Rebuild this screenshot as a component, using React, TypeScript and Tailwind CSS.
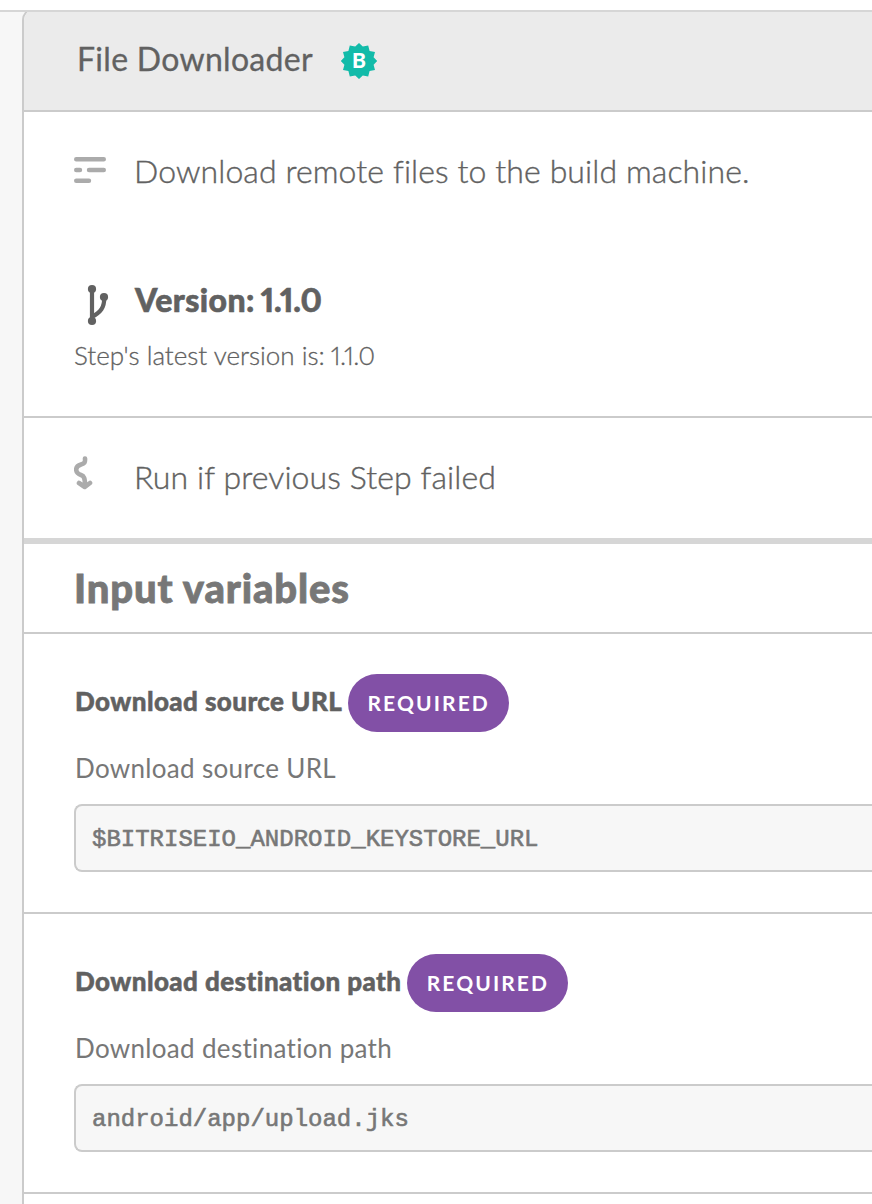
import React from "react";

function VerifiedBadge() {
  return (
    <svg width="38" height="38" viewBox="0 0 38 38" className="ml-[27px] mt-[1px]">
      <path
        d="M19 1L22.8 4.6L28.2 3.4L29.6 8.9L35 10L33.6 15.2L37.2 19L33.6 22.8L35 28L29.6 29.1L28.2 34.6L22.8 33.4L19 37L15.2 33.4L9.8 34.6L8.4 29.1L3 28L4.4 22.8L0.8 19L4.4 15.2L3 10L8.4 8.9L9.8 3.4L15.2 4.6Z"
        fill="#12bba9"
      />
      <text
        x="19"
        y="26"
        textAnchor="middle"
        fill="#fff"
        className="font-['Lato',sans-serif] text-[21px] font-black"
      >
        B
      </text>
    </svg>
  );
}

function TextIcon() {
  return (
    <svg width="32" height="27" viewBox="0 0 32 27" stroke="#ababab" strokeWidth="4.4" strokeLinecap="round">
      <path d="M2.2 2.3H29.8M2.2 13H6M15 13H29.8M2.2 23.7H15" />
    </svg>
  );
}

function BranchIcon() {
  return (
    <svg width="22" height="42" viewBox="0 0 22 42" fill="#616161" className="ml-[13px] mt-[10px]">
      <circle cx="5" cy="5" r="4.1" />
      <circle cx="5" cy="37" r="4.1" />
      <circle cx="17" cy="13" r="4.1" />
      <path d="M5 5V37M17.3 13C17.5 24 13.5 28 5 33" fill="none" stroke="#616161" strokeWidth="4.2" />
    </svg>
  );
}

function ArrowIcon() {
  return (
    <svg
      width="20"
      height="34"
      viewBox="0 0 20 34"
      fill="none"
      stroke="#ababab"
      strokeWidth="4.6"
      strokeLinecap="round"
      strokeLinejoin="round"
    >
      <path d="M11 2.5C11.3 6.5 10.5 7.5 7 8.5C3.5 9.5 2.2 11.5 2.2 13.5C2.2 16.5 4 18 7 19C10 20 11 22 11 30M5 27L10.8 31L16 27" />
    </svg>
  );
}

const inputs = [
  {
    name: "Download source URL",
    value: "$BITRISEIO_ANDROID_KEYSTORE_URL",
  },
  {
    name: "Download destination path",
    value: "android/app/upload.jks",
  },
];

function App() {
  return (
    <div className="h-[1204px] overflow-hidden bg-white pt-[10px] font-['Lato',sans-serif] whitespace-nowrap text-[#616161]">
      <div className="h-[1194px] overflow-hidden border-t-2 border-[#d6d6d6] bg-[#f7f7f7] pl-[22px]">
        <div className="-mt-[4px] h-[1300px] overflow-hidden rounded-tl-[12px] border-t-2 border-l-2 border-[#cbcbcb] bg-white">
          <div className="flex h-[102px] items-center border-b-2 border-[#cbcbcb] bg-[#ebebeb] pl-[53px]">
            <h1 className="pb-[2px] text-[32px] tracking-[0.3px] [-webkit-text-stroke:0.3px_#616161]">
              File Downloader
            </h1>
            <VerifiedBadge />
          </div>

          <div className="h-[306px] border-b-2 border-[#cbcbcb] pt-[36px] pl-[50px]">
            <div className="flex h-[48px] items-center">
              <div className="-mt-[4px] w-[60px]">
                <TextIcon />
              </div>
              <p className="pb-[2px] text-[32px] font-light tracking-[0.1px] [-webkit-text-stroke:0.4px_#616161]">
                Download remote files to the build machine.
              </p>
            </div>
            <div className="mt-[80px] flex h-[48px] items-center">
              <div className="w-[60px]">
                <BranchIcon />
              </div>
              <h2 className="pb-px pl-px text-[32px] font-black tracking-[0.4px] [-webkit-text-stroke:0.6px_#616161]">
                Version: <span className="-ml-[2px] tracking-[-0.2px] proportional-nums">1.1.0</span>
              </h2>
            </div>
            <p className="mt-[13px] text-[26px] leading-[36px] font-light [-webkit-text-stroke:0.3px_#616161]">
              Step's latest version is: <span className="-ml-[1px] tracking-[-0.7px] proportional-nums">1.1.0</span>
            </p>
          </div>

          <div className="flex h-[126px] items-center border-b-6 border-[#d6d6d6] pl-[50px]">
            <div className="-mt-[10px] w-[60px]">
              <ArrowIcon />
            </div>
            <p className="pb-[2px] text-[32px] font-light tracking-[0.1px] [-webkit-text-stroke:0.4px_#616161]">
              Run if previous Step failed
            </p>
          </div>

          <div className="flex h-[90px] items-center border-b-2 border-[#cbcbcb] pl-[50px]">
            <h2 className="text-[40px] font-black tracking-[0.85px] text-[#777] [-webkit-text-stroke:0.8px_#777]">
              Input variables
            </h2>
          </div>

          {inputs.map((input) => (
            <div key={input.name} className="h-[280px] border-b-2 border-[#cbcbcb] pt-[40px] pl-[50px]">
              <div className="flex h-[58px] items-center">
                <h3 className="mr-[6px] pb-[4px] pl-px text-[26px] font-black tracking-[0.42px] [-webkit-text-stroke:0.5px_#616161]">
                  {input.name}
                </h3>
                <span className="flex h-[58px] w-[161px] items-center justify-center rounded-full bg-[#8250a6] text-[21px] font-bold tracking-[2.1px] text-white">
                  REQUIRED
                </span>
              </div>
              <p className="mt-[18px] h-[36px] pl-px text-[26px] leading-[36px] tracking-[0.32px] text-[#777]">
                {input.name}
              </p>
              <div className="mt-[18px] flex h-[68px] items-center rounded-l-[8px] border-2 border-r-0 border-[#cbcbcb] bg-[#f7f7f7] pt-[3px] pl-[16px] font-['Liberation_Mono',monospace] text-[24px] text-[#777] [-webkit-text-stroke:0.6px_#777]">
                {input.value}
              </div>
            </div>
          ))}
        </div>
      </div>
    </div>
  );
}

export default App;
